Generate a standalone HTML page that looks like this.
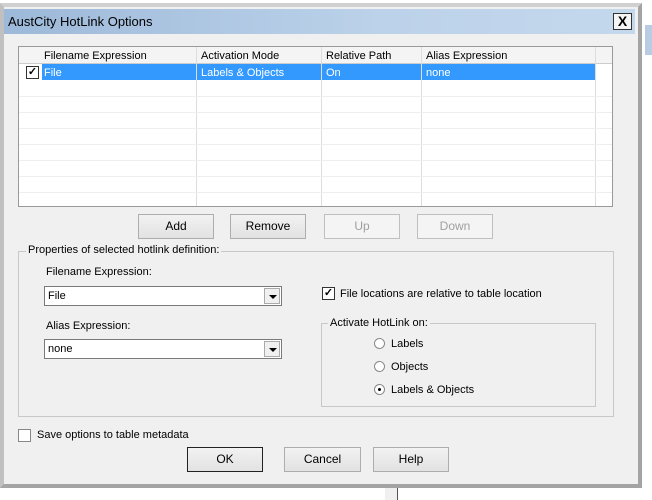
<!DOCTYPE html>
<html><head><style>
*{margin:0;padding:0;box-sizing:border-box}
body{width:652px;height:500px;background:#fff;position:relative;overflow:hidden;font-family:"Liberation Sans",sans-serif;font-size:11px;color:#000}
.a{position:absolute}
.dlg{left:0;top:3px;width:642px;height:485px;background:#f0f0f0;border:4px solid #a4a4a4;border-top-color:#d0d0d0;border-left-color:#c0c0c0}
.title{left:4px;top:9px;width:631px;height:25px;background:linear-gradient(90deg,#9db9d9,#bcd2ea 60%,#c4d8ec)}
.btn{position:absolute;height:25px;border:1px solid #adadad;background:linear-gradient(#f2f2f2,#e2e2e2);text-align:center;line-height:23px;font-size:12px}
.dis{color:#a0a0a0;border-color:#bfbfbf;background:#f4f4f4}
.cb{position:absolute;width:13px;height:13px;border:1px solid #333;background:#fff;font-size:11px;line-height:11px;text-align:center;font-weight:bold}
.rad{position:absolute;width:11px;height:11px;border-radius:50%;border:1px solid #888;background:#fff}
.combo{position:absolute;height:20px;background:#fff;border:1px solid #7a7a7a;padding:3px 3px;font-size:11px}
.combo .ar{position:absolute;right:1px;top:1px;width:16px;height:16px;background:#f0f0f0;border:1px solid #aaa}
.combo .ar:after{content:"";position:absolute;left:4px;top:6px;border:4px solid transparent;border-top:4px solid #000;border-bottom:0}
.grp{position:absolute;border:1px solid #c8c8c8}
.gl{position:absolute;background:#f0f0f0;padding:0 2px}
</style></head><body>
<div class="a" style="left:645px;top:25px;width:7px;height:30px;background:#b8cde3"></div>
<div class="a" style="left:385px;top:480px;width:13px;height:20px;background:#f0f0f0;border-right:1px solid #555"></div>
<div class="a dlg"></div>
<div class="a title"></div>
<div class="a" style="left:8px;top:14px;font-size:13px">AustCity HotLink Options</div>
<div class="a" style="left:613px;top:13px;width:19px;height:17px;border:1px solid #333;background:#f5f5f5;text-align:center;font-weight:bold;font-size:14px;line-height:15px">X</div>

<div class="a" style="left:18px;top:46px;width:595px;height:161px;background:#fff;border:1px solid #999"></div>
<div class="a" style="left:19px;top:47px;width:593px;height:17px;background:#f4f4f4;border-bottom:1px solid #ccc"></div>
<div class="a" style="left:42px;top:64px;width:553px;height:16px;background:#3399ff"></div>
<div class="a" style="left:196px;top:47px;width:1px;height:159px;background:#ddd"></div>
<div class="a" style="left:321px;top:47px;width:1px;height:159px;background:#ddd"></div>
<div class="a" style="left:421px;top:47px;width:1px;height:159px;background:#ddd"></div>
<div class="a" style="left:595px;top:47px;width:1px;height:159px;background:#ddd"></div>
<div class="a" style="left:19px;top:96px;width:593px;height:1px;background:#eee;box-shadow:0 16px #eee,0 32px #eee,0 48px #eee,0 64px #eee,0 80px #eee,0 96px #eee"></div>
<div class="a" style="left:44px;top:50px">Filename Expression</div>
<div class="a" style="left:201px;top:50px">Activation Mode</div>
<div class="a" style="left:326px;top:50px">Relative Path</div>
<div class="a" style="left:426px;top:50px">Alias Expression</div>
<div class="cb" style="left:26px;top:66px">✓</div>
<div class="a" style="left:44px;top:67px;color:#fff">File</div>
<div class="a" style="left:201px;top:67px;color:#fff">Labels &amp; Objects</div>
<div class="a" style="left:326px;top:67px;color:#fff">On</div>
<div class="a" style="left:426px;top:67px;color:#fff">none</div>

<div class="btn" style="left:138px;top:214px;width:76px">Add</div>
<div class="btn" style="left:230px;top:214px;width:76px">Remove</div>
<div class="btn dis" style="left:324px;top:214px;width:76px">Up</div>
<div class="btn dis" style="left:417px;top:214px;width:76px">Down</div>

<div class="grp" style="left:18px;top:251px;width:596px;height:166px"></div>
<div class="gl" style="left:26px;top:244px">Properties of selected hotlink definition:</div>
<div class="a" style="left:46px;top:266px">Filename Expression:</div>
<div class="combo" style="left:44px;top:286px;width:238px">File<div class="ar"></div></div>
<div class="a" style="left:46px;top:320px">Alias Expression:</div>
<div class="combo" style="left:44px;top:339px;width:238px">none<div class="ar"></div></div>
<div class="cb" style="left:322px;top:287px">✓</div>
<div class="a" style="left:340px;top:288px">File locations are relative to table location</div>

<div class="grp" style="left:321px;top:323px;width:275px;height:84px"></div>
<div class="gl" style="left:328px;top:317px">Activate HotLink on:</div>
<div class="rad" style="left:374px;top:338px"></div>
<div class="a" style="left:391px;top:338px">Labels</div>
<div class="rad" style="left:374px;top:361px"></div>
<div class="a" style="left:391px;top:361px">Objects</div>
<div class="rad" style="left:374px;top:384px"><div style="position:absolute;left:3px;top:3px;width:3px;height:3px;background:#000;border-radius:50%"></div></div>
<div class="a" style="left:391px;top:384px">Labels &amp; Objects</div>

<div class="cb" style="left:18px;top:429px;border-color:#888"></div>
<div class="a" style="left:37px;top:429px">Save options to table metadata</div>

<div class="btn" style="left:187px;top:447px;width:76px;border:1px solid #222">OK</div>
<div class="btn" style="left:284px;top:447px;width:77px">Cancel</div>
<div class="btn" style="left:373px;top:447px;width:76px">Help</div>
</body></html>
